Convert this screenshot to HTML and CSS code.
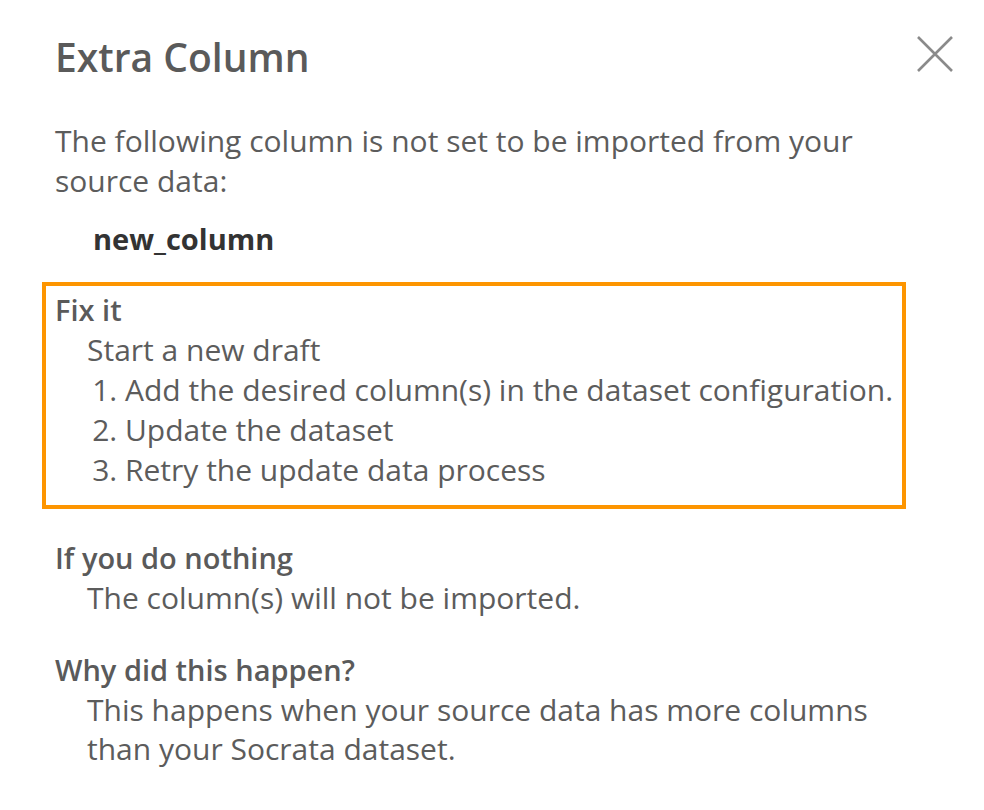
FILE: index.html
```html
<!DOCTYPE html>
<html>
<head>
<meta charset="utf-8">
<link rel="stylesheet" href="styles.css">
</head>
<body>
<div class="modal">
  <div class="header">
    <h1 class="title">Extra Column</h1>
    <button class="close" aria-label="Close">
      <svg width="38" height="36" viewBox="0 0 38 36"><path d="M2 1 L36 35 M36 1 L2 35" stroke="#8a8a8a" stroke-width="2.6" fill="none"/></svg>
    </button>
  </div>
  <p class="intro">The following column is not set to be imported from your source data:</p>
  <div class="colname">new_column</div>
  <div class="fixbox">
    <div class="sec-title">Fix it</div>
    <div class="indent">Start a new draft</div>
    <ol class="steps">
      <li>Add the desired column(s) in the dataset configuration.</li>
      <li>Update the dataset</li>
      <li>Retry the update data process</li>
    </ol>
  </div>
  <div class="section">
    <div class="sec-title">If you do nothing</div>
    <div class="indent">The column(s) will not be imported.</div>
  </div>
  <div class="section why">
    <div class="sec-title">Why did this happen?</div>
    <div class="indent">This happens when your source data has more columns than your Socrata dataset.</div>
  </div>
</div>
</body>
</html>
```
FILE: styles.css
```css
html, body {
  margin: 0;
  padding: 0;
  background: #ffffff;
}
body {
  font-family: "Open Sans", "Liberation Sans", sans-serif;
  color: #5c5c5c;
  font-size: 30px;
  line-height: 40px;
}
.modal {
  padding: 33px 30px 0 55px;
  width: 899px;
}
.header {
  display: flex;
  justify-content: space-between;
  align-items: flex-start;
}
.title {
  margin: 0;
  font-size: 39px;
  line-height: 48px;
  font-weight: 600;
  color: #5a5a5a;
}
.close {
  border: 0;
  background: none;
  padding: 0;
  margin: 3px 0 0 0;
  width: 38px;
  height: 36px;
  cursor: pointer;
}
.close svg { display: block; }
.intro {
  margin: 40px 0 0 0;
  width: 830px;
}
.colname {
  margin: 18px 0 0 38px;
  font-weight: 700;
  font-size: 29px;
  color: #333333;
}
.fixbox {
  margin: 23px 0 0 -13px;
  border: 4px solid #fd9500;
  padding: 4px 0 15px 9px;
  width: 847px;
}
.sec-title {
  font-weight: 600;
  font-size: 29px;
  color: #5a5a5a;
}
.indent {
  padding-left: 32px;
}
.steps {
  margin: 0;
  padding: 0 0 0 70px;
}
.steps li {
  white-space: nowrap;
}
.section {
  margin-top: 29px;
}
.section.why {
  margin-top: 32px;
}
.why .indent {
  width: 800px;
  line-height: 39px;
}
```
